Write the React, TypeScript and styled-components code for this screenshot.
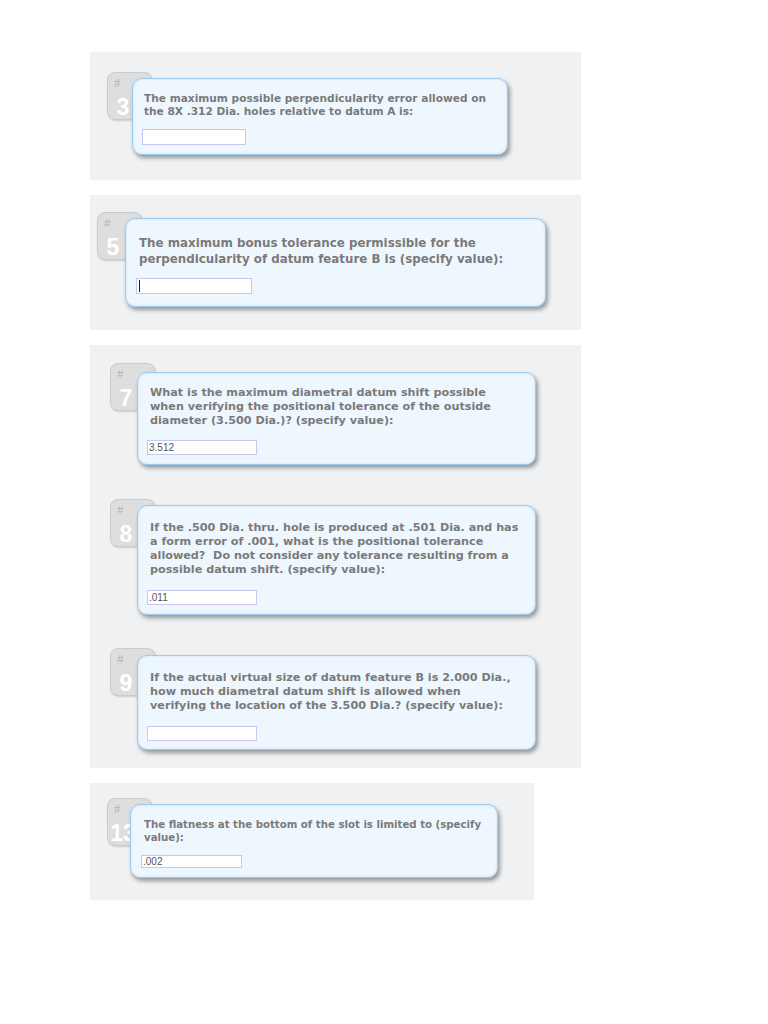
import styled, { createGlobalStyle } from "styled-components";

interface Question {
  num: string;
  lines: string[];
  value?: string;
  caret?: boolean;
  // layout of this question inside its panel
  pad: [number, number, number, number];
  dx: number;
  dy: number;
  width: number;
  height: number;
  fs: number;
  lh: number;
  textTop: number;
  textLeft: number;
  inputTop: number;
  inputLeft: number;
  inputW: number;
  inputH: number;
}

interface PanelData {
  width: number;
  questions: Question[];
}

const panels: PanelData[] = [
  {
    width: 491,
    questions: [
      {
        num: "3",
        lines: [
          "The maximum possible perpendicularity error allowed on",
          "the 8X .312 Dia. holes relative to datum A is:",
        ],
        pad: [20, 0, 25, 17],
        dx: 25,
        dy: 6,
        width: 376,
        height: 77,
        fs: 10.6,
        lh: 13,
        textTop: 14,
        textLeft: 12,
        inputTop: 51,
        inputLeft: 10,
        inputW: 104,
        inputH: 16,
      },
    ],
  },
  {
    width: 491,
    questions: [
      {
        num: "5",
        lines: [
          "The maximum bonus tolerance permissible for the",
          "perpendicularity of datum feature B is (specify value):",
        ],
        caret: true,
        pad: [17, 0, 23, 7],
        dx: 28,
        dy: 6,
        width: 421,
        height: 89,
        fs: 11.85,
        lh: 16,
        textTop: 17,
        textLeft: 14,
        inputTop: 60,
        inputLeft: 11,
        inputW: 116,
        inputH: 16,
      },
    ],
  },
  {
    width: 491,
    questions: [
      {
        num: "7",
        lines: [
          "What is the maximum diametral datum shift possible",
          "when verifying the positional tolerance of the outside",
          "diameter (3.500 Dia.)? (specify value):",
        ],
        value: "3.512",
        pad: [18, 0, 0, 20],
        dx: 27,
        dy: 9,
        width: 399,
        height: 93,
        fs: 11.2,
        lh: 14,
        textTop: 14,
        textLeft: 13,
        inputTop: 68,
        inputLeft: 10,
        inputW: 110,
        inputH: 15,
      },
      {
        num: "8",
        lines: [
          "If the .500 Dia. thru. hole is produced at .501 Dia. and has",
          "a form error of .001, what is the positional tolerance",
          "allowed?\u00a0 Do not consider any tolerance resulting from a",
          "possible datum shift. (specify value):",
        ],
        value: ".011",
        pad: [34, 0, 0, 20],
        dx: 27,
        dy: 6,
        width: 399,
        height: 110,
        fs: 11.2,
        lh: 14,
        textTop: 16,
        textLeft: 13,
        inputTop: 85,
        inputLeft: 10,
        inputW: 110,
        inputH: 15,
      },
      {
        num: "9",
        lines: [
          "If the actual virtual size of datum feature B is 2.000 Dia.,",
          "how much diametral datum shift is allowed when",
          "verifying the location of the 3.500 Dia.? (specify value):",
        ],
        pad: [33, 0, 18, 20],
        dx: 27,
        dy: 7,
        width: 399,
        height: 95,
        fs: 11.2,
        lh: 14,
        textTop: 16,
        textLeft: 13,
        inputTop: 71,
        inputLeft: 10,
        inputW: 110,
        inputH: 15,
      },
    ],
  },
  {
    width: 444,
    questions: [
      {
        num: "13",
        lines: [
          "The flatness at the bottom of the slot is limited to (specify",
          "value):",
        ],
        value: ".002",
        pad: [15, 0, 22, 17],
        dx: 23,
        dy: 6,
        width: 368,
        height: 74,
        fs: 10.2,
        lh: 13,
        textTop: 14,
        textLeft: 14,
        inputTop: 51,
        inputLeft: 11,
        inputW: 101,
        inputH: 13,
      },
    ],
  },
];

const GlobalStyle = createGlobalStyle`
  html, body {
    margin: 0;
    padding: 0;
    background: #fff;
  }
`;

const Page = styled.div`
  display: flex;
  flex-direction: column;
  align-items: flex-start;
  gap: 15px;
  padding: 52px 0 0 90px;
  font-family: "DejaVu Sans", Verdana, sans-serif;
`;

const Panel = styled.section<{ $w: number }>`
  width: ${(p) => p.$w}px;
  background: #f0f1f2;
  display: flex;
  flex-direction: column;
`;

const Row = styled.div<{ $pad: [number, number, number, number] }>`
  display: flex;
  align-items: flex-start;
  padding: ${(p) => p.$pad.map((v) => v + "px").join(" ")};
`;

const Badge = styled.div`
  flex: none;
  width: 45px;
  height: 48px;
  box-sizing: border-box;
  background: #dedede;
  border: 1px solid #cbcbcb;
  border-radius: 8px;
  box-shadow: 1px 1px 2px rgba(0, 0, 0, 0.15);
  display: flex;
  flex-direction: column;
  padding: 3px 0 0 2px;
`;

const Hash = styled.span`
  font-family: "Liberation Serif", serif;
  font-size: 13px;
  line-height: 13px;
  color: #b4b4b4;
  padding-left: 4px;
`;

const Num = styled.span`
  width: 26px;
  margin-top: 6px;
  text-align: center;
  font-family: "Liberation Sans", Arial, sans-serif;
  font-weight: bold;
  font-size: 23px;
  line-height: 24px;
  color: #fff;
  white-space: nowrap;
`;

const Card = styled.div<{ $dx: number; $dy: number; $w: number; $h: number }>`
  position: relative;
  z-index: 1;
  flex: none;
  box-sizing: border-box;
  margin-left: ${(p) => p.$dx - 45}px;
  margin-top: ${(p) => p.$dy}px;
  width: ${(p) => p.$w}px;
  height: ${(p) => p.$h}px;
  background: #eff7fe;
  border: 1px solid #9fcbef;
  border-radius: 10px;
  box-shadow: inset 0 0 3px #c3e1fa, 2px 3px 4px rgba(0, 0, 0, 0.38);
`;

const Text = styled.p<{ $fs: number; $lh: number; $top: number; $left: number }>`
  margin: 0;
  padding: ${(p) => p.$top - 1}px 0 0 ${(p) => p.$left - 1}px;
  font-size: ${(p) => p.$fs}px;
  line-height: ${(p) => p.$lh}px;
  font-weight: bold;
  color: #7a7a7a;
  white-space: nowrap;
`;

const FieldWrap = styled.div<{ $top: number; $left: number }>`
  position: absolute;
  top: ${(p) => p.$top - 1}px;
  left: ${(p) => p.$left - 1}px;
`;

const Field = styled.input<{ $w: number; $h: number }>`
  display: block;
  box-sizing: border-box;
  width: ${(p) => p.$w}px;
  height: ${(p) => p.$h}px;
  margin: 0;
  padding: 0 1px;
  border: 1px solid #c9c6f2;
  background: #fff;
  font-family: "Liberation Sans", Arial, sans-serif;
  font-size: 10px;
  color: #555;
  outline: none;
`;

const Caret = styled.span`
  position: absolute;
  left: 3px;
  top: 2px;
  bottom: 2px;
  width: 1px;
  background: #222;
`;

function QuestionItem({ q }: { q: Question }) {
  return (
    <Row $pad={q.pad}>
      <Badge>
        <Hash>#</Hash>
        <Num>{q.num}</Num>
      </Badge>
      <Card $dx={q.dx} $dy={q.dy} $w={q.width} $h={q.height}>
        <Text $fs={q.fs} $lh={q.lh} $top={q.textTop} $left={q.textLeft}>
          {q.lines.map((line, i) => (
            <span key={i}>
              {line}
              {i < q.lines.length - 1 && <br />}
            </span>
          ))}
        </Text>
        <FieldWrap $top={q.inputTop} $left={q.inputLeft}>
          <Field
            $w={q.inputW}
            $h={q.inputH}
            readOnly
            defaultValue={q.value ?? ""}
          />
          {q.caret && <Caret />}
        </FieldWrap>
      </Card>
    </Row>
  );
}

export default function App() {
  return (
    <>
      <GlobalStyle />
      <Page>
        {panels.map((panel, i) => (
          <Panel key={i} $w={panel.width}>
            {panel.questions.map((q) => (
              <QuestionItem key={q.num} q={q} />
            ))}
          </Panel>
        ))}
      </Page>
    </>
  );
}
